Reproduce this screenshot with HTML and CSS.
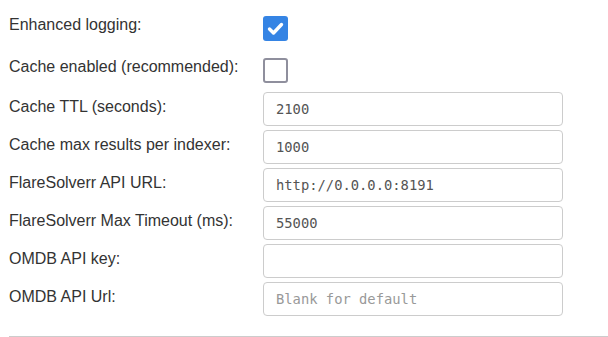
FILE: index.html
```html
<!DOCTYPE html>
<html lang="en">
<head>
    <meta charset="UTF-8">
    <title>Settings</title>
    <link rel="stylesheet" href="styles.css">
</head>
<body>
    <form class="settings">
        <div class="row row-check first">
            <label class="label">Enhanced logging:</label>
            <span class="check checked">
                <svg width="25" height="25" viewBox="0 0 25 25"><path d="M6.5 13 L10.5 17 L18.5 8.5" fill="none" stroke="#fff" stroke-width="3.4" stroke-linecap="round" stroke-linejoin="round"/></svg>
            </span>
        </div>
        <div class="row row-check">
            <label class="label">Cache enabled (recommended):</label>
            <span class="check"></span>
        </div>
        <div class="row">
            <label class="label">Cache TTL (seconds):</label>
            <input class="field" type="text" value="2100">
        </div>
        <div class="row">
            <label class="label">Cache max results per indexer:</label>
            <input class="field" type="text" value="1000">
        </div>
        <div class="row">
            <label class="label">FlareSolverr API URL:</label>
            <input class="field" type="text" value="http://0.0.0.0:8191">
        </div>
        <div class="row">
            <label class="label">FlareSolverr Max Timeout (ms):</label>
            <input class="field" type="text" value="55000">
        </div>
        <div class="row">
            <label class="label">OMDB API key:</label>
            <input class="field" type="text" value="">
        </div>
        <div class="row">
            <label class="label">OMDB API Url:</label>
            <input class="field" type="text" placeholder="Blank for default">
        </div>
        <hr class="rule">
    </form>
</body>
</html>
```

FILE: styles.css
```css
body {
    margin: 0;
    background: #fff;
    font: 16px/23px "Liberation Sans", Arial, sans-serif;
    color: #333;
}
.settings {
    padding: 13px 0 0 9px;
}
.row {
    display: flex;
    align-items: flex-start;
    margin-bottom: 4px;
}
.row-check {
    margin-bottom: 9px;
}
.row-check.first {
    margin-bottom: 14px;
}
.label {
    width: 254px;
    flex: none;
    padding-top: 3px;
}
.row-check .label {
    padding-top: 0;
}
.check {
    box-sizing: border-box;
    display: block;
    width: 25px;
    height: 25px;
    margin-top: 3px;
    border: 2px solid #8f8f9d;
    border-radius: 3px;
    background: #fff;
}
.check.checked {
    border: none;
    background: #3584e4;
}
.check svg {
    display: block;
}
.field {
    box-sizing: border-box;
    width: 300px;
    height: 34px;
    margin: 0;
    padding: 0 12px;
    border: 1px solid #ccc;
    border-radius: 4px;
    background: #fff;
    font: 13.8px "DejaVu Sans Mono", monospace;
    color: #555;
    outline: none;
}
.field::placeholder {
    color: #999;
}
.rule {
    margin: 20px 0 0;
    border: 0;
    border-top: 1px solid #ccc;
}
```
